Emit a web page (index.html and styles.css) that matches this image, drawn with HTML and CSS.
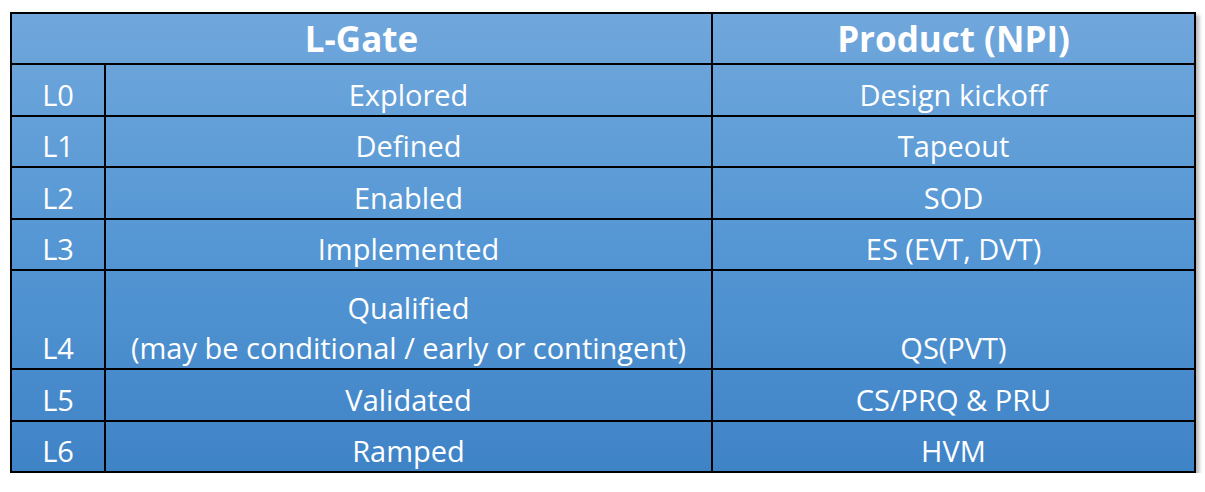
FILE: index.html
```html
<!DOCTYPE html>
<html>
<head>
<meta charset="utf-8">
<link rel="stylesheet" href="styles.css">
</head>
<body>
<div class="wrap">
<table class="gates">
  <colgroup>
    <col class="c1"><col class="c2"><col class="c3">
  </colgroup>
  <tr class="head">
    <th colspan="2">L-Gate</th>
    <th>Product (NPI)</th>
  </tr>
  <tr><td>L0</td><td>Explored</td><td>Design kickoff</td></tr>
  <tr><td>L1</td><td>Defined</td><td>Tapeout</td></tr>
  <tr><td>L2</td><td>Enabled</td><td>SOD</td></tr>
  <tr><td>L3</td><td>Implemented</td><td>ES (EVT, DVT)</td></tr>
  <tr class="tall"><td>L4</td><td>Qualified<br>(may be conditional / early or contingent)</td><td>QS(PVT)</td></tr>
  <tr><td>L5</td><td>Validated</td><td>CS/PRQ &amp; PRU</td></tr>
  <tr><td>L6</td><td>Ramped</td><td>HVM</td></tr>
</table>
</div>
</body>
</html>
```
FILE: styles.css
```css
html, body {
  margin: 0;
  padding: 0;
  background: #ffffff;
}
.wrap {
  padding: 12px 0 0 10px;
}
.gates {
  border-collapse: collapse;
  width: 1184px;
  table-layout: fixed;
  background: linear-gradient(to bottom, #70a7dc 0%, #5597d4 50%, #3f83c7 100%);
  box-shadow: 3px 3px 4px rgba(0,0,0,0.3);
  font-family: "Open Sans", Lato, sans-serif;
  color: #ffffff;
}
.c1 { width: 94px; }
.c2 { width: 607px; }
.c3 { width: 483px; }
.gates th, .gates td {
  border: 2px solid #000000;
  padding: 0;
  text-align: center;
}
.gates th {
  height: 49px;
  font-size: 35px;
  font-weight: bold;
  vertical-align: middle;
  line-height: 40px;
}
.gates td {
  height: 49.5px;
  font-size: 29px;
  line-height: 40px;
  vertical-align: bottom;
}
.gates .tall td {
  height: 97px;
}
```
